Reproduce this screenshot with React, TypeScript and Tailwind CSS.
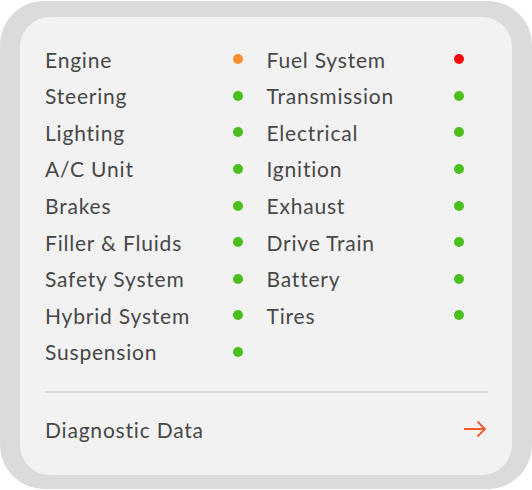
import React from "react";

type Status = "ok" | "warn" | "error";

const left: [string, Status][] = [
  ["Engine", "warn"],
  ["Steering", "ok"],
  ["Lighting", "ok"],
  ["A/C Unit", "ok"],
  ["Brakes", "ok"],
  ["Filler & Fluids", "ok"],
  ["Safety System", "ok"],
  ["Hybrid System", "ok"],
  ["Suspension", "ok"],
];

const right: [string, Status][] = [
  ["Fuel System", "error"],
  ["Transmission", "ok"],
  ["Electrical", "ok"],
  ["Ignition", "ok"],
  ["Exhaust", "ok"],
  ["Drive Train", "ok"],
  ["Battery", "ok"],
  ["Tires", "ok"],
];

const dotColor: Record<Status, string> = {
  ok: "bg-[#4cbf1e]",
  warn: "bg-[#ff8c2e]",
  error: "bg-[#f50a0a]",
};

function Row({ label, status }: { label: string; status: Status }) {
  return (
    <div className="flex items-center justify-between h-[36.6px] pr-[24px]">
      <span className="text-[21px] text-[#474747] tracking-[0.8px]">{label}</span>
      <span className={`w-[10px] h-[10px] rounded-full ${dotColor[status]}`} />
    </div>
  );
}

export default function App() {
  return (
    <div
      className="w-[532px] h-[490px] bg-white"
      style={{ fontFamily: "Lato, 'Noto Sans', sans-serif" }}
    >
      <div className="h-[488px] mt-[1px] bg-[#dbdbdb] rounded-[44px] pt-[16px] pb-[14px] px-[20px]">
        <div className="h-full bg-[#f2f2f2] rounded-[30px] pt-[24px] px-[25px] pr-[24px]">
          <div className="grid grid-cols-2">
            <div className="flex flex-col">
              {left.map(([l, s]) => (
                <Row key={l} label={l} status={s} />
              ))}
            </div>
            <div className="flex flex-col">
              {right.map(([l, s]) => (
                <Row key={l} label={l} status={s} />
              ))}
            </div>
          </div>
          <div className="mt-[21px] border-t-[2px] border-[#dadada]" />
          <div className="flex items-center justify-between h-[72px]">
            <span className="text-[21px] text-[#474747] tracking-[0.8px]">Diagnostic Data</span>
            <svg width="24" height="18" viewBox="0 0 24 18" className="mr-[1px]">
              <path
                d="M1 9H22M14.5 1.5L22 9L14.5 16.5"
                fill="none"
                stroke="#f4582f"
                strokeWidth="1.8"
              />
            </svg>
          </div>
        </div>
      </div>
    </div>
  );
}
